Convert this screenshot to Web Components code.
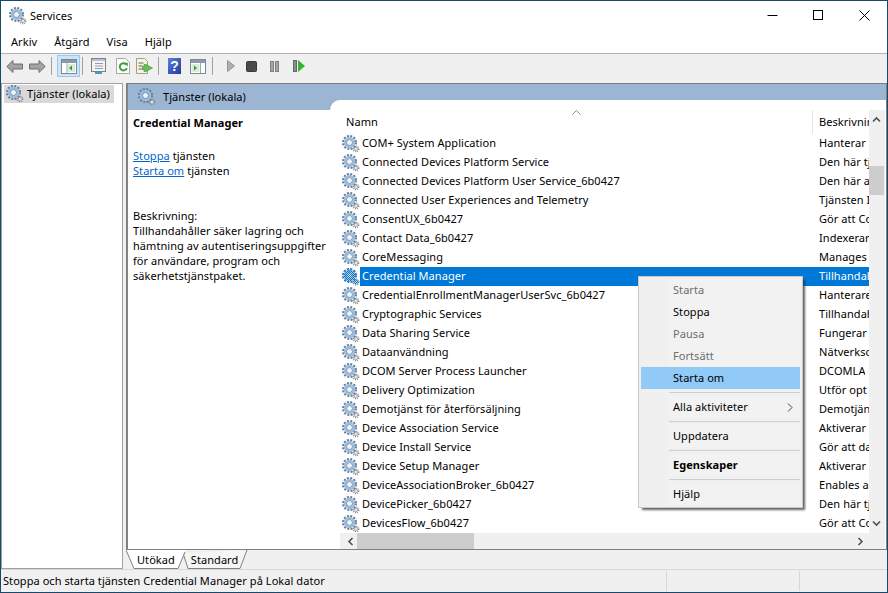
<!DOCTYPE html>
<html>
<head>
<meta charset="utf-8">
<title>Services</title>
<style>
  html, body { margin: 0; height: 100%; }
  body { font: 11px "Noto Sans", "Open Sans", sans-serif; letter-spacing: .06px; color: #000; overflow: hidden; }
</style>
</head>
<body>
<svc-window></svc-window>
<script>
const GEAR_SHAPES = `
  <circle cx="7.500" cy="7.500" r="6.500" stroke="#5e7d9d" stroke-width="2" stroke-dasharray="2 1.400" fill="none"/>
  <circle cx="7.500" cy="7.500" r="4.600" stroke="#9dbcd9" stroke-width="2.400" fill="none"/>
  <circle cx="7.500" cy="7.500" r="3" stroke="#6f8fb0" stroke-width="1" fill="#eef4f9"/>
  <circle cx="14" cy="14" r="2.700" stroke="#80868e" stroke-width="1.300" stroke-dasharray="1.100 .9" fill="none"/>
  <circle cx="14" cy="14" r="1.500" stroke="#a3a9b0" stroke-width="1" fill="#fff"/>`;

// same shapes, painted with the checker used for the selected row
const GEAR_CHECKER = GEAR_SHAPES.replace(/stroke="#\w+"/g, 'stroke="url(#c)"').replace(/fill="#\w+"/g, 'fill="url(#c)"');

class SvcGear extends HTMLElement {
  constructor() {
    super();
    this.attachShadow({mode:'open'});
  }
  connectedCallback() {
    const chk = this.hasAttribute('selected') ? `
      <defs><pattern id="c" width="2" height="2" patternUnits="userSpaceOnUse"><rect width="1" height="1" fill="#0078d7"/><rect x="1" y="1" width="1" height="1" fill="#0078d7"/></pattern></defs>
      ${GEAR_CHECKER}` : '';
    this.shadowRoot.innerHTML = `<style>
      :host { display: block; width: 18px; height: 18px; flex: none; }
      svg { display: block; }
    </style><svg viewBox="0 0 18 18" width="18" height="18">${GEAR_SHAPES}${chk}</svg>`;
  }
}
customElements.define('svc-gear', SvcGear);

class SvcTitlebar extends HTMLElement {
  constructor() {
    super();
    this.attachShadow({mode:'open'}).innerHTML = `<style>
      :host { display: flex; align-items: center; height: 30px; background: #fff; padding-left: 8px; }
      span { margin-left: 3px; flex: 1; padding-bottom: 2px; }
      .b { width: 46px; height: 30px; display: flex; align-items: center; justify-content: center; margin-top: -2px; }
    </style>
    <svc-gear></svc-gear><span>Services</span>
    <div class="b"><svg width="11" height="11"><path d="M0.5 5.5h10" stroke="#000"/></svg></div>
    <div class="b"><svg width="11" height="11"><rect x=".5" y=".5" width="9" height="9" fill="none" stroke="#000"/></svg></div>
    <div class="b"><svg width="11" height="11"><path d="M.5 .5l10 10M10.5 .5l-10 10" stroke="#000" fill="none"/></svg></div>`;
  }
}
customElements.define('svc-titlebar', SvcTitlebar);

class SvcMenubar extends HTMLElement {
  constructor() {
    super();
    this.attachShadow({mode:'open'}).innerHTML = `<style>
      :host { display: flex; height: 22px; gap: 17px; padding-left: 10px; align-items: center; background: #fff; border-bottom: 1px solid #b0b0b5; }
      span { padding-bottom: 2px; }
    </style><span>Arkiv</span><span>Åtgärd</span><span>Visa</span><span>Hjälp</span>`;
  }
}
customElements.define('svc-menubar', SvcMenubar);

class SvcToolbar extends HTMLElement {
  constructor() {
    super();
    const sep = m => `<i class="sep" style="margin-left:${m}px"></i>`;
    const btn = (m, svg, cls = '') => `<div class="b ${cls}" style="margin-left:${m}px">${svg}</div>`;
    this.attachShadow({mode:'open'}).innerHTML = `<style>
      :host { display: flex; align-items: flex-start; height: 25px; padding: 1px 0 0 2px; background: #f0f0f0; }
      .b { display: flex; width: 23px; height: 22px; align-items: center; justify-content: center; box-sizing: border-box; flex: none; }
      .on { background: #cce4f7; border: 1px solid #99c9ef; }
      .sep { display: block; width: 1px; height: 18px; background: #a0a0a0; margin-top: 2px; flex: none; }
      svg { display: block; }
    </style>
    ${btn(0, '<svg width="17" height="13"><path d="M.8 6.500l6.200-6v3.500h9.500v5H7v3.500z" fill="#a3a3a3" stroke="#6f6f6f"/></svg>')}
    ${btn(0, '<svg width="17" height="13"><path d="M16.200 6.500l-6.200-6v3.500H.5v5H10v3.500z" fill="#a3a3a3" stroke="#6f6f6f"/></svg>')}
    ${sep(2)}
    ${btn(5, '<svg width="16" height="15"><rect x=".5" y=".5" width="15" height="14" fill="#fff" stroke="#7a8a99"/><rect x="1" y="1" width="14" height="3" fill="#8a9aaa"/><rect x="7" y="5" width="7" height="8" fill="#dceadc"/><path d="M11 6.500l-3 2.500 3 2.500z" fill="#2aa12a"/><path d="M6 4v10" stroke="#9aa"/></svg>', 'on')}
    ${sep(2)}
    ${btn(4, '<svg width="15" height="16"><rect x=".5" y=".5" width="14" height="13" fill="#f4f4f4" stroke="#808080"/><rect x="1" y="1" width="13" height="2" fill="#b9c2cc"/><path d="M4 5.500h8M4 8h8M4 10.500h8" stroke="#8aa0b8"/><path d="M4 15h7" stroke="#3a9be0" stroke-width="2"/></svg>')}
    ${btn(1, '<svg width="14" height="16"><path d="M.5 .5h9l4 4v11H.5z" fill="#fff" stroke="#a8a8a8"/><path d="M10.200 6.500a3.600 3.600 0 1 0 .6 3.500" fill="none" stroke="#3aa03a" stroke-width="2"/><path d="M8 4.800h3.800v3.800z" fill="#3aa03a"/></svg>')}
    ${btn(-1, '<svg width="17" height="16"><path d="M.5 .5h8l3 3v12H.5z" fill="#f8f4dc" stroke="#a09f90"/><path d="M2.500 5h5M2.500 8h4M2.500 11h5" stroke="#667"/><path d="M8 6.500v2H6.500v3H8v2h2l6.500-3.500L10 6.500z" fill="#66bf55" stroke="#4a9c3e" stroke-width=".7"/></svg>')}
    ${sep(2)}
    ${btn(4, '<svg width="13" height="16"><defs><linearGradient id="h" x1="0" y1="0" x2="1" y2="1"><stop offset="0" stop-color="#5b7fe0"/><stop offset="1" stop-color="#223c96"/></linearGradient></defs><rect width="13" height="16" fill="url(#h)"/><text x="6.500" y="13" text-anchor="middle" font-family="Liberation Sans" font-weight="700" font-size="14" fill="#fff">?</text></svg>')}
    ${btn(0, '<svg width="16" height="15"><rect x=".5" y=".5" width="15" height="14" fill="#fff" stroke="#7a8a99"/><rect x="1" y="1" width="14" height="3" fill="#8a9aaa"/><rect x="1.500" y="5" width="8" height="8" fill="#dceadc"/><path d="M4 6.500l3 2.500-3 2.500z" fill="#2aa12a"/><path d="M10.500 4v10" stroke="#9aa"/></svg>')}
    ${sep(3)}
    ${btn(6, '<svg width="8" height="12"><path d="M.5 .5l7 5.500-7 5.500z" fill="#b0b0b0" stroke="#949494"/></svg>')}
    ${btn(-2, '<svg width="11" height="11"><rect x=".5" y=".5" width="10" height="10" rx="1" fill="#4a4a4a" stroke="#3a3a3a"/></svg>')}
    ${btn(0, '<svg width="9" height="11"><rect x=".5" y=".5" width="3" height="10" fill="#a4a4a4" stroke="#808080"/><rect x="5.500" y=".5" width="3" height="10" fill="#a4a4a4" stroke="#808080"/></svg>')}
    ${btn(1, '<svg width="12" height="12"><rect x=".5" y=".5" width="3" height="11" fill="#8c8c8c" stroke="#666"/><path d="M5 0l7 6-7 6z" fill="#2fb52f"/></svg>')}`;
  }
}
customElements.define('svc-toolbar', SvcToolbar);

class SvcTree extends HTMLElement {
  constructor() {
    super();
    this.attachShadow({mode:'open'}).innerHTML = `<style>
      :host { display: block; width: 118px; flex: none; background: #fff; border: 1px solid #a0a0a0; padding: 1px; }
      .n { display: flex; align-items: center; gap: 3px; height: 18px; margin: 0 0 0 1px; width: 110px; box-sizing: border-box; padding-left: 2px; background: #d9d9d9; white-space: nowrap; }
      span { padding-bottom: 2px; }
    </style><div class="n"><svc-gear></svc-gear><span>Tjänster (lokala)</span></div>`;
  }
}
customElements.define('svc-tree', SvcTree);

class SvcRow extends HTMLElement {
  static get observedAttributes() { return ['name', 'desc']; }
  constructor() {
    super();
    this.attachShadow({mode:'open'}).innerHTML = `<style>
      :host { display: flex; height: 19px; align-items: center; padding-left: 2px; white-space: nowrap; }
      .t { display: flex; align-items: center; flex: 1; height: 19px; box-sizing: border-box; padding: 0 0 2px 2px; min-width: 0; overflow: hidden; }
      .name { width: 455px; flex: none; overflow: hidden; }
      .desc { padding-left: 2px; overflow: hidden; flex: none; }
      :host([selected]) .t { background: #0078d7; color: #fff; }
    </style>
    <svc-gear></svc-gear>
    <div class="t"><div class="name"></div><div class="desc"></div></div>`;
  }
  connectedCallback() {
    const g = this.shadowRoot.querySelector('svc-gear');
    if (this.hasAttribute('selected')) g.setAttribute('selected', '');
    g.connectedCallback();
  }
  attributeChangedCallback(k, o, v) {
    this.shadowRoot.querySelector('.' + k).textContent = v;
  }
}
customElements.define('svc-row', SvcRow);

const ROWS = [
  ['COM+ System Application','Hanterar'],
  ['Connected Devices Platform Service','Den här tjänst'],
  ['Connected Devices Platform User Service_6b0427','Den här anv'],
  ['Connected User Experiences and Telemetry','Tjänsten I'],
  ['ConsentUX_6b0427','Gör att Co'],
  ['Contact Data_6b0427','Indexerar'],
  ['CoreMessaging','Manages'],
  ['Credential Manager','Tillhandahåller'],
  ['CredentialEnrollmentManagerUserSvc_6b0427','Hanterare'],
  ['Cryptographic Services','Tillhandahåller'],
  ['Data Sharing Service','Fungerar'],
  ['Dataanvändning','Nätverksco'],
  ['DCOM Server Process Launcher','DCOMLA'],
  ['Delivery Optimization','Utför opt'],
  ['Demotjänst för återförsäljning','Demotjänst'],
  ['Device Association Service','Aktiverar'],
  ['Device Install Service','Gör att dat'],
  ['Device Setup Manager','Aktiverar'],
  ['DeviceAssociationBroker_6b0427','Enables a'],
  ['DevicePicker_6b0427','Den här tjänst'],
  ['DevicesFlow_6b0427','Gör att Co']
];

class SvcList extends HTMLElement {
  constructor() {
    super();
    const rows = ROWS.map(r => `<svc-row name="${r[0]}" desc="${r[1]}"${r[0] === 'Credential Manager' ? ' selected' : ''}></svc-row>`).join('');
    this.attachShadow({mode:'open'}).innerHTML = `<style>
      :host { display: flex; flex-direction: column; flex: 1; min-width: 0; background: #fff; border-radius: 10px 0 0 0; margin-top: -10px; padding: 0 1px 0 10px; position: relative; overflow: hidden; }
      .main { display: flex; flex: 1; min-height: 0; padding-top: 10px; }
      .col { flex: 1; min-width: 0; overflow: hidden; }
      .head { display: flex; height: 24px; position: relative; }
      .head div { display: flex; align-items: center; padding: 0 0 2px 6px; box-sizing: border-box; }
      .head .n { width: 473px; flex: none; border-right: 1px solid #e5e5e5; }
      .head .d { white-space: nowrap; overflow: hidden; }
      .sort { position: absolute; left: 232px; top: 0; }
      .rows { height: 399px; overflow: hidden; }
      .vs { width: 16px; background: #f0f0f0; flex: none; display: flex; flex-direction: column; align-items: flex-start; }
      .vs .th { width: 15px; height: 29px; background: #cdcdcd; margin-top: 41px; }
      .vs .up { height: 15px; padding: 6px 0 0 3px; box-sizing: border-box; }
      .vs .dn { margin-top: auto; height: 16px; padding: 3px 0 0 3px; box-sizing: border-box; }
      .hs { height: 16px; background: #f0f0f0; display: flex; align-items: center; flex: none; }
      .hs .th { width: 117px; height: 16px; background: #cdcdcd; margin-left: 3px; }
      .hs svg { flex: none; }
      .hs .l { margin-left: 7px; }
      .hs .r { margin-left: auto; margin-right: 21px; }
      svg { display: block; }
    </style>
    <div class="main">
      <div class="col">
        <div class="head"><div class="n">Namn</div><div class="d">Beskrivning</div>
          <svg class="sort" width="9" height="5"><path d="M.5 4.500l4-4 4 4" fill="none" stroke="#8a8a8a"/></svg></div>
        <div class="rows">${rows}</div>
      </div>
      <div class="vs">
        <div class="up"><svg width="9" height="7"><path d="M1 5.500l3.500-3.500 3.500 3.500" fill="none" stroke="#505050" stroke-width="1.600"/></svg></div>
        <div class="th"></div>
        <div class="dn"><svg width="9" height="7"><path d="M1 1.500l3.500 3.500 3.500-3.500" fill="none" stroke="#505050" stroke-width="1.600"/></svg></div>
      </div>
    </div>
    <div class="hs">
      <svg class="l" width="7" height="9"><path d="M5.500 1l-3.500 3.500 3.500 3.500" fill="none" stroke="#505050" stroke-width="1.600"/></svg>
      <div class="th"></div>
      <svg class="r" width="7" height="9"><path d="M1.500 1l3.500 3.500-3.500 3.500" fill="none" stroke="#505050" stroke-width="1.600"/></svg>
    </div>`;
  }
}
customElements.define('svc-list', SvcList);

class SvcDetail extends HTMLElement {
  constructor() {
    super();
    this.attachShadow({mode:'open'}).innerHTML = `<style>
      :host { display: block; width: 202px; flex: none; padding: 5px 5px 0 5px; box-sizing: border-box; background: #fff; line-height: 15px; white-space: nowrap; }
      h1 { font: inherit; font-weight: 700; margin: 0 0 18px; }
      a { color: #0066cc; text-decoration: underline; }
      p { margin: 0; }
      .d { margin-top: 30px; }
    </style>
    <h1>Credential Manager</h1>
    <p><a>Stoppa</a> tjänsten</p>
    <p><a>Starta om</a> tjänsten</p>
    <p class="d">Beskrivning:<br>Tillhandahåller säker lagring och<br>hämtning av autentiseringsuppgifter<br>för användare, program och<br>säkerhetstjänstpaket.</p>`;
  }
}
customElements.define('svc-detail', SvcDetail);

class SvcTabs extends HTMLElement {
  constructor() {
    super();
    this.attachShadow({mode:'open'}).innerHTML = `<style>
      :host { display: flex; height: 19px; background: #f0f0f0; position: relative; }
      svg { position: absolute; left: 0; top: 0; }
      span { position: relative; line-height: 19px; }
      .a { margin-left: 11px; }
      .b { margin-left: 16px; }
    </style>
    <svg width="130" height="19">
      <path d="M57 3L62 18.500H114L121 0" fill="#f5f5f5" stroke="#808080"/>
      <path d="M0 0L8 18.500H52L59 2V0z" fill="#fff"/>
      <path d="M0 0L8 18.500H52L59 2" fill="none" stroke="#808080"/>
    </svg>
    <span class="a">Utökad</span><span class="b">Standard</span>`;
  }
}
customElements.define('svc-tabs', SvcTabs);

class SvcStatus extends HTMLElement {
  constructor() {
    super();
    this.attachShadow({mode:'open'}).innerHTML = `<style>
      :host { display: flex; height: 22px; background: #f0f0f0; border-top: 1px solid #d7d7d7; }
      div { border-right: 1px solid #d7d7d7; display: flex; align-items: center; padding: 0 0 2px 2px; margin: 1px 0 1px; box-sizing: border-box; }
      .m { width: 666px; white-space: nowrap; }
      .x { width: 133px; }
    </style><div class="m">Stoppa och starta tjänsten Credential Manager på Lokal dator</div><div class="x"></div>`;
  }
}
customElements.define('svc-status', SvcStatus);

class SvcMenu extends HTMLElement {
  constructor() {
    super();
    this.attachShadow({mode:'open'}).innerHTML = `<style>
      :host { position: absolute; left: 637px; top: 275px; width: 165px; box-sizing: border-box; padding: 2px; background: #f0f0f0; border: 1px solid #c8c8c8; box-shadow: 3px 3px 2px -1px rgba(50,50,50,.75); }
      .i { height: 22px; box-sizing: border-box; display: flex; align-items: center; padding: 0 0 2px 32px; background: linear-gradient(90deg, #f0f0f0 28px, #f2f2f2 28px); position: relative; }
      .dis { color: #6d6d6d; }
      .hi { background: #91c9f7; }
      .s { height: 7px; margin-left: 28px; position: relative; }
      .s::after { content: ''; position: absolute; left: 0; right: 0; top: 3px; height: 1px; background: #cfcfcf; }
      b { font-weight: 700; }
      svg { position: absolute; left: 146px; top: 7px; }
    </style>
    <div class="i dis">Starta</div>
    <div class="i">Stoppa</div>
    <div class="i dis">Pausa</div>
    <div class="i dis">Fortsätt</div>
    <div class="i hi">Starta om</div>
    <div class="s"></div>
    <div class="i">Alla aktiviteter<svg width="6" height="9"><path d="M1 .5l4 4-4 4" fill="none" stroke="#444"/></svg></div>
    <div class="s"></div>
    <div class="i">Uppdatera</div>
    <div class="s"></div>
    <div class="i"><b>Egenskaper</b></div>
    <div class="s"></div>
    <div class="i">Hjälp</div>`;
  }
}
customElements.define('svc-menu', SvcMenu);

class SvcWindow extends HTMLElement {
  constructor() {
    super();
    this.attachShadow({mode:'open'}).innerHTML = `<style>
      :host { display: flex; flex-direction: column; width: 888px; height: 593px; box-sizing: border-box; border: 1px solid #17496b; background: #f0f0f0; position: relative; }
      .body { display: flex; flex: 1; min-height: 0; gap: 3px; padding-top: 3px; }
      .right { flex: 1; min-width: 0; display: flex; flex-direction: column; }
      .panel { flex: 1; min-height: 0; border: 1px solid #808080; border-left-width: 2px; display: flex; flex-direction: column; background: #fff; }
      .band { height: 26px; background: #9bb5d2; display: flex; align-items: center; gap: 7px; padding-left: 10px; flex: none; }
      .band span { padding-bottom: 2px; }
      .cols { flex: 1; min-height: 0; display: flex; }
    </style>
    <svc-titlebar></svc-titlebar>
    <svc-menubar></svc-menubar>
    <svc-toolbar></svc-toolbar>
    <div class="body">
      <svc-tree></svc-tree>
      <div class="right">
        <div class="panel">
          <div class="band"><svc-gear></svc-gear><span>Tjänster (lokala)</span></div>
          <div class="cols"><svc-detail></svc-detail><svc-list></svc-list></div>
        </div>
        <svc-tabs></svc-tabs>
      </div>
    </div>
    <svc-status></svc-status>
    <svc-menu></svc-menu>`;
  }
}
customElements.define('svc-window', SvcWindow);
</script>
</body>
</html>
